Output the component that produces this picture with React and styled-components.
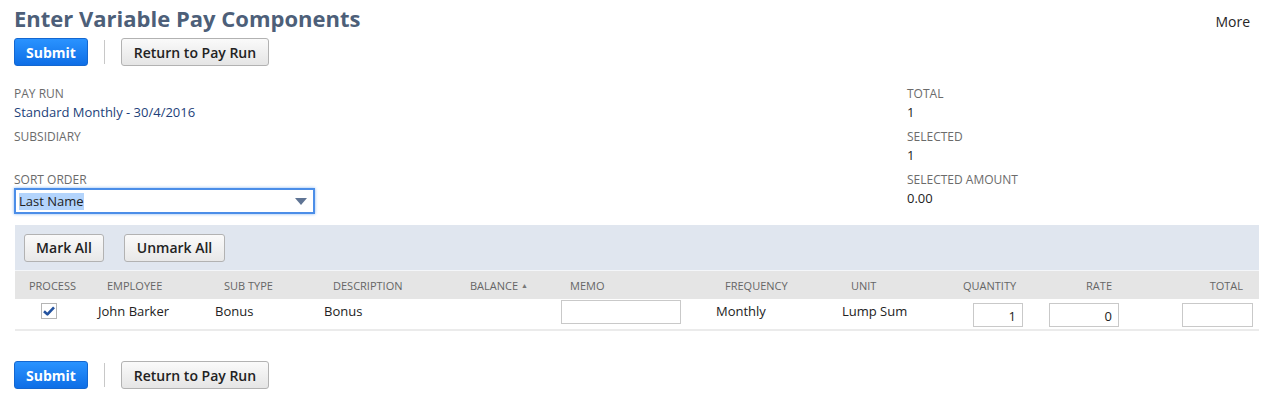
import React from 'react';
import styled, { createGlobalStyle } from 'styled-components';

const GlobalStyle = createGlobalStyle`
  body {
    margin: 0;
    background: #fff;
    font-family: "Open Sans", "Liberation Sans", sans-serif;
    color: #333;
  }
`;

const columns = [
  { key: 'process', label: 'PROCESS', width: 75, align: 'center' },
  { key: 'employee', label: 'EMPLOYEE', width: 117 },
  { key: 'subtype', label: 'SUB TYPE', width: 109 },
  { key: 'description', label: 'DESCRIPTION', width: 126 },
  { key: 'balance', label: 'BALANCE', width: 111, align: 'right', pad: 25, sorted: true },
  { key: 'memo', label: 'MEMO', width: 155 },
  { key: 'frequency', label: 'FREQUENCY', width: 126 },
  { key: 'unit', label: 'UNIT', width: 129 },
  { key: 'quantity', label: 'QUANTITY', width: 70, align: 'right', pad: 20 },
  { key: 'rate', label: 'RATE', width: 96, align: 'right', pad: 17 },
  { key: 'total', label: 'TOTAL', width: 130, align: 'right', pad: 16 },
];

const gridCols = columns.map(c => c.width + 'px').join(' ');

const App = () => {
  return (
    <Page>
      <GlobalStyle />
      <TitleRow>
        <Title>Enter Variable Pay Components</Title>
        <More>More</More>
      </TitleRow>
      <ButtonBar>
        <PrimaryButton>Submit</PrimaryButton>
        <Divider />
        <SecondaryButton>Return to Pay Run</SecondaryButton>
      </ButtonBar>

      <Fields>
        <FieldColumn>
          <Field>
            <Label>Pay Run</Label>
            <Value link>Standard Monthly - 30/4/2016</Value>
          </Field>
          <Field>
            <Label>Subsidiary</Label>
            <Value />
          </Field>
          <Field>
            <Label>Sort Order</Label>
            <Select>
              <Selected>Last Name</Selected>
              <svg width="12" height="7" viewBox="0 0 12 7">
                <path d="M0 0 H12 L6 7 Z" fill="#5f7494" />
              </svg>
            </Select>
          </Field>
        </FieldColumn>
        <FieldColumn right>
          <Field>
            <Label>Total</Label>
            <Value>1</Value>
          </Field>
          <Field>
            <Label>Selected</Label>
            <Value>1</Value>
          </Field>
          <Field>
            <Label>Selected Amount</Label>
            <Value>0.00</Value>
          </Field>
        </FieldColumn>
      </Fields>

      <Sublist>
        <Band>
          <GrayButton w={80}>Mark All</GrayButton>
          <GrayButton w={101}>Unmark All</GrayButton>
        </Band>
        <HeaderRow>
          {columns.map(c => (
            <HeadCell key={c.key} align={c.align} pad={c.pad}>
              {c.label}
              {c.sorted && <SortArrow>▲</SortArrow>}
            </HeadCell>
          ))}
        </HeaderRow>
        <DataRow>
          <Cell align="center">
            <Checkbox>
              <svg width="12" height="10" viewBox="0 0 12 10">
                <path d="M1 5.2 L4.4 8.4 L11 1.4" stroke="#24539f" strokeWidth="2.6" fill="none" strokeLinejoin="round" />
              </svg>
            </Checkbox>
          </Cell>
          <Cell>John Barker</Cell>
          <Cell>Bonus</Cell>
          <Cell>Bonus</Cell>
          <Cell />
          <Cell><TextInput w={120} /></Cell>
          <Cell>Monthly</Cell>
          <Cell>Lump Sum</Cell>
          <Cell align="right"><TextInput w={50} defaultValue="1" right /></Cell>
          <Cell align="right"><TextInput w={70} defaultValue="0" right /></Cell>
          <Cell align="right" pad={6}><TextInput w={71} /></Cell>
        </DataRow>
      </Sublist>

      <ButtonBar bottom>
        <PrimaryButton>Submit</PrimaryButton>
        <Divider />
        <SecondaryButton>Return to Pay Run</SecondaryButton>
      </ButtonBar>
    </Page>
  );
};

export default App;

const Page = styled.div`
  width: 1265px;
  padding: 4px 7px 0 14px;
  box-sizing: border-box;
`;

const TitleRow = styled.div`
  display: flex;
  justify-content: space-between;
  align-items: flex-start;
`;

const Title = styled.h1`
  margin: 0;
  font-size: 22px;
  line-height: 28px;
  font-weight: 700;
  color: #4d5f79;
`;

const More = styled.span`
  font-size: 14px;
  line-height: 20px;
  margin-top: 8px;
  margin-right: 8px;
  color: #262626;
`;

const ButtonBar = styled.div`
  display: flex;
  align-items: center;
  margin-top: ${p => (p.bottom ? '30px' : '6px')};
`;

const PrimaryButton = styled.button`
  height: 28px;
  width: 74px;
  padding: 0;
  border: 1px solid #1467d0;
  border-radius: 3px;
  background: linear-gradient(#2a93ff, #0e6ee6);
  color: #fff;
  font-family: inherit;
  font-size: 14px;
  font-weight: 700;
  white-space: nowrap;
`;

const Divider = styled.div`
  width: 1px;
  height: 24px;
  background: #c8c8c8;
  margin: 0 16px;
`;

const SecondaryButton = styled.button`
  height: 28px;
  width: 148px;
  padding: 0;
  border: 1px solid #b2b2b2;
  border-radius: 3px;
  background: linear-gradient(#fafafa, #e5e5e5);
  color: #222;
  font-family: inherit;
  font-size: 14px;
  font-weight: 600;
  white-space: nowrap;
`;

const Fields = styled.div`
  display: flex;
  margin-top: 19px;
`;

const FieldColumn = styled.div`
  display: flex;
  flex-direction: column;
  gap: 6px;
  width: ${p => (p.right ? 'auto' : '893px')};
`;

const Field = styled.div`
  display: flex;
  flex-direction: column;
  min-height: 37px;
`;

const Label = styled.div`
  font-size: 12px;
  line-height: 17px;
  text-transform: uppercase;
  color: #6b6b6b;
`;

const Value = styled.div`
  font-size: 13px;
  line-height: 20px;
  color: ${p => (p.link ? '#1d3f7a' : '#222')};
`;

const Select = styled.div`
  width: 301px;
  height: 26px;
  box-sizing: border-box;
  border: 2px solid #4b8ee8;
  box-shadow: 0 0 3px #8ab8f2;
  display: flex;
  align-items: center;
  justify-content: space-between;
  padding: 0 6px 0 3px;
  background: #fff;
  svg { display: block; }
`;

const Selected = styled.span`
  font-size: 13px;
  line-height: 17px;
  background: #b3d4fc;
  color: #222;
`;

const Sublist = styled.div`
  margin-top: 11px;
  width: 1244px;
  margin-left: 1px;
`;

const Band = styled.div`
  background: #e0e6ef;
  height: 45px;
  display: flex;
  align-items: center;
  gap: 20px;
  padding-left: 9px;
  border-bottom: 1px solid #f4f6f9;
`;

const GrayButton = styled.button`
  height: 28px;
  width: ${p => p.w}px;
  padding: 0;
  border: 1px solid #b2b2b2;
  border-radius: 3px;
  background: linear-gradient(#fafafa, #e8e8e8);
  color: #222;
  font-family: inherit;
  font-size: 14px;
  font-weight: 600;
  white-space: nowrap;
`;

const HeaderRow = styled.div`
  display: grid;
  grid-template-columns: ${gridCols};
  height: 28px;
  background: #e5e5e5;
  align-items: center;
`;

const HeadCell = styled.div`
  font-size: 11px;
  color: #666;
  text-transform: uppercase;
  text-align: ${p => p.align || 'left'};
  padding-left: ${p => (p.align ? '0' : '17px')};
  padding-right: ${p => (p.pad ? p.pad + 'px' : '0')};
  white-space: nowrap;
`;

const SortArrow = styled.span`
  font-size: 7px;
  margin-left: 3px;
  vertical-align: 2px;
  color: #777;
`;

const DataRow = styled.div`
  display: grid;
  grid-template-columns: ${gridCols};
  height: 30px;
  align-items: center;
  border-bottom: 2px solid #ebebeb;
`;

const Cell = styled.div`
  font-size: 13px;
  color: #222;
  display: flex;
  justify-content: ${p => (p.align === 'center' ? 'center' : p.align === 'right' ? 'flex-end' : 'flex-start')};
  padding-left: ${p => (p.align ? '0' : '8px')};
  padding-right: ${p => (p.align === 'right' ? (p.pad || 10) + 'px' : '0')};
  white-space: nowrap;
  margin-top: ${p => (p.align ? '0' : '-6px')};
`;

const Checkbox = styled.div`
  width: 14px;
  height: 14px;
  border: 1px solid #b5b5b5;
  background: #fff;
  display: flex;
  align-items: center;
  justify-content: center;
  margin-left: -7px;
  margin-top: -6px;
`;

const TextInput = styled.input`
  width: ${p => p.w}px;
  height: 24px;
  box-sizing: border-box;
  border: 1px solid #c9c9c9;
  font-family: inherit;
  font-size: 13px;
  color: #222;
  text-align: ${p => (p.right ? 'right' : 'left')};
  padding: 2px 6px 0 4px;
  margin-top: 2px;
`;
